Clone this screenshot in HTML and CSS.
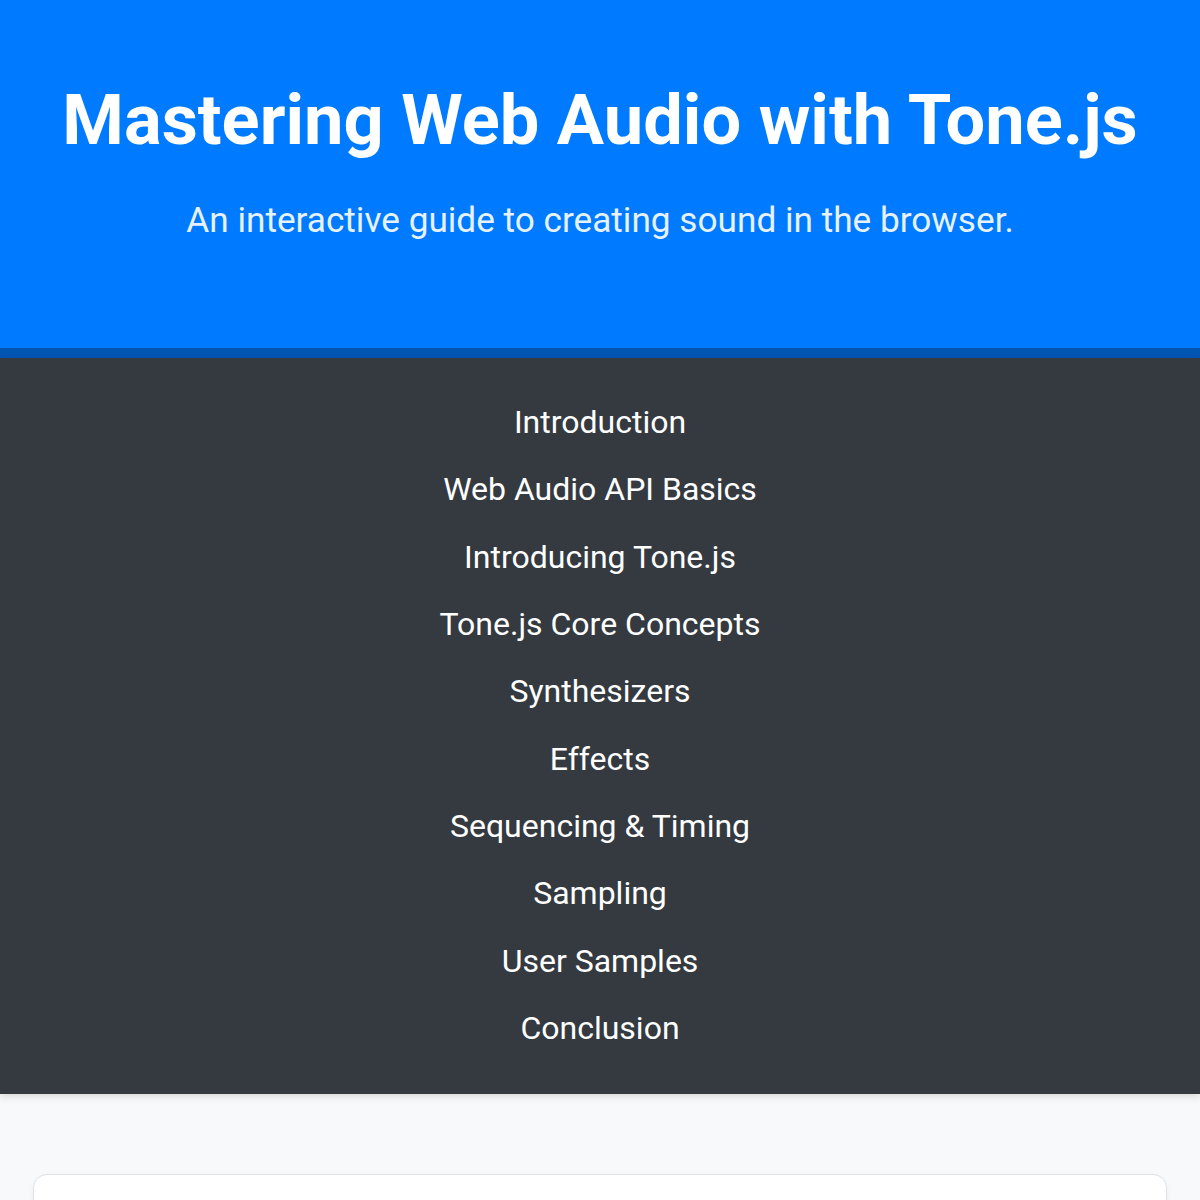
FILE: index.html
```html
<!DOCTYPE html>
<html lang="en">
<head>
  <meta charset="UTF-8">
  <meta name="viewport" content="width=device-width, initial-scale=1.0">
  <title>Mastering Web Audio with Tone.js</title>
  <link rel="stylesheet" href="styles.css">
</head>
<body>
  <!-- Intestazione principale -->
  <header class="site-header">
    <h1 class="site-title">Mastering Web Audio with Tone.js</h1>
    <p class="site-subtitle">An interactive guide to creating sound in the browser.</p>
  </header>

  <!-- Indice dei capitoli -->
  <nav class="site-nav">
    <ul class="nav-list">
      <li><a href="#intro">Introduction</a></li>
      <li><a href="#basics">Web Audio API Basics</a></li>
      <li><a href="#tone">Introducing Tone.js</a></li>
      <li><a href="#core">Tone.js Core Concepts</a></li>
      <li><a href="#synths">Synthesizers</a></li>
      <li><a href="#effects">Effects</a></li>
      <li><a href="#sequencing">Sequencing &amp; Timing</a></li>
      <li><a href="#sampling">Sampling</a></li>
      <li><a href="#user-samples">User Samples</a></li>
      <li><a href="#conclusion">Conclusion</a></li>
    </ul>
  </nav>

  <main class="content">
    <section class="card" id="intro">
      <h2>Introduction</h2>
    </section>
  </main>
</body>
</html>
```

FILE: styles.css
```css
body {
  margin: 0;
  font-family: Roboto, "Liberation Sans", Arial, sans-serif;
  background-color: #f8f9fa;
  color: #212529;
}
/* Intestazione blu con bordo scuro */
.site-header {
  background-color: #007bff;
  color: #fff;
  text-align: center;
  padding: 78px 20px 107px;
  border-bottom: 10px solid #0056b3;
}
.site-title {
  margin: 0;
  font-size: 4.4rem;
  font-weight: 700;
  line-height: 84px;
}
.site-subtitle {
  margin: 37px 0 0;
  font-size: 2.2rem;
  font-weight: 400;
  line-height: 42px;
  opacity: 0.9;
}
/* Menu di navigazione */
.site-nav {
  background-color: #343a40;
  box-shadow: 0 2px 8px rgba(0, 0, 0, 0.15);
  padding: 40px 0 42px;
}
.nav-list {
  list-style: none;
  margin: 0;
  padding: 0;
  display: flex;
  flex-direction: column;
  align-items: center;
  gap: 19.33px;
}
.nav-list a {
  display: block;
  color: #fff;
  text-decoration: none;
  font-size: 2rem;
  line-height: 48px;
}
/* Contenuto */
.content {
  padding: 80px 33px;
}
.card {
  background-color: #fff;
  border: 1px solid #dee2e6;
  border-radius: 14px;
  padding: 56px 40px 40px;
  box-shadow: 0 2px 6px rgba(0, 0, 0, 0.05);
}
.card h2 {
  margin: 0;
}
```
